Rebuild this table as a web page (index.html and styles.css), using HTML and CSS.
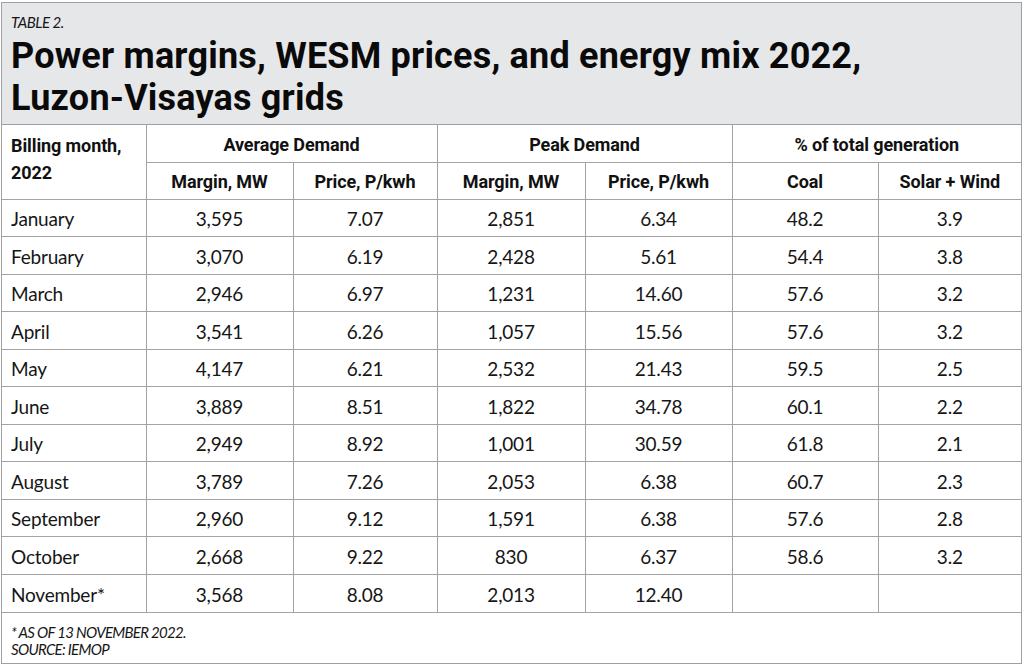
FILE: index.html
```html
<!DOCTYPE html>
<html>
<head>
<meta charset="utf-8">
<link rel="stylesheet" href="styles.css">
</head>
<body>
<div class="frame">
  <div class="head">
    <div class="kicker">TABLE 2.</div>
    <h1 class="title">Power margins, WESM prices, and energy mix 2022,<br>Luzon-Visayas grids</h1>
  </div>
  <table class="grid">
    <colgroup>
      <col class="c1"><col class="c2"><col class="c3"><col class="c4"><col class="c5"><col class="c6"><col class="c7">
    </colgroup>
    <thead>
      <tr class="hr">
        <th class="month-h" rowspan="2">Billing month,<br>2022</th>
        <th colspan="2">Average Demand</th>
        <th colspan="2">Peak Demand</th>
        <th colspan="2">% of total generation</th>
      </tr>
      <tr class="hr">
        <th>Margin, MW</th><th>Price, P/kwh</th><th>Margin, MW</th><th>Price, P/kwh</th><th>Coal</th><th>Solar + Wind</th>
      </tr>
    </thead>
    <tbody>
      <tr><td>January</td><td>3,595</td><td>7.07</td><td>2,851</td><td>6.34</td><td>48.2</td><td>3.9</td></tr>
      <tr><td>February</td><td>3,070</td><td>6.19</td><td>2,428</td><td>5.61</td><td>54.4</td><td>3.8</td></tr>
      <tr><td>March</td><td>2,946</td><td>6.97</td><td>1,231</td><td>14.60</td><td>57.6</td><td>3.2</td></tr>
      <tr><td>April</td><td>3,541</td><td>6.26</td><td>1,057</td><td>15.56</td><td>57.6</td><td>3.2</td></tr>
      <tr><td>May</td><td>4,147</td><td>6.21</td><td>2,532</td><td>21.43</td><td>59.5</td><td>2.5</td></tr>
      <tr><td>June</td><td>3,889</td><td>8.51</td><td>1,822</td><td>34.78</td><td>60.1</td><td>2.2</td></tr>
      <tr><td>July</td><td>2,949</td><td>8.92</td><td>1,001</td><td>30.59</td><td>61.8</td><td>2.1</td></tr>
      <tr><td>August</td><td>3,789</td><td>7.26</td><td>2,053</td><td>6.38</td><td>60.7</td><td>2.3</td></tr>
      <tr><td>September</td><td>2,960</td><td>9.12</td><td>1,591</td><td>6.38</td><td>57.6</td><td>2.8</td></tr>
      <tr><td>October</td><td>2,668</td><td>9.22</td><td>830</td><td>6.37</td><td>58.6</td><td>3.2</td></tr>
      <tr><td>November*</td><td>3,568</td><td>8.08</td><td>2,013</td><td>12.40</td><td></td><td></td></tr>
    </tbody>
  </table>
  <div class="foot">* AS OF 13 NOVEMBER 2022.<br>SOURCE: IEMOP</div>
</div>
</body>
</html>
```

FILE: styles.css
```css
html, body {
  margin: 0;
  padding: 0;
  background: #ffffff;
}
body {
  font-family: "Lato", "Open Sans", sans-serif;
  color: #161616;
}
.frame {
  box-sizing: border-box;
  width: 1021px;
  margin: 2px 0 0 1px;
  border: 1px solid #a0a0a0;
  background: #ffffff;
}
.head {
  box-sizing: border-box;
  height: 122px;
  background: #e6e7e9;
  border-bottom: 1px solid #a0a0a0;
  padding: 10px 0 0 9px;
}
.kicker {
  font-family: "Lato", sans-serif;
  font-style: italic;
  font-size: 15px;
  line-height: 18px;
  letter-spacing: -0.5px;
}
.title {
  margin: 4px 0 0 0;
  font-family: "Roboto", sans-serif;
  font-weight: 700;
  font-size: 36px;
  line-height: 42px;
  letter-spacing: 0.2px;
  color: #0a0a0a;
}
.grid {
  width: 1019px;
  table-layout: fixed;
  border-collapse: collapse;
  border-style: hidden;
}
.c1 { width: 144px; }
.c2 { width: 147px; }
.c3 { width: 144px; }
.c4 { width: 148px; }
.c5 { width: 147px; }
.c6 { width: 146px; }
.c7 { width: 143px; }
.grid th, .grid td {
  border: 1px solid #a3a3a3;
  padding: 0;
  text-align: center;
}
.grid th {
  height: 37px;
  font-family: "Roboto", sans-serif;
  font-weight: 700;
  font-size: 18px;
  letter-spacing: -0.1px;
  padding-top: 2px;
  box-sizing: border-box;
  color: #111111;
}
.grid th.month-h {
  text-align: left;
  vertical-align: top;
  padding: 7px 0 0 9px;
  line-height: 27px;
}
.grid td {
  height: 37.5px;
  font-size: 19px;
  font-weight: 400;
  padding-top: 2px;
  box-sizing: border-box;
  letter-spacing: -0.2px;
}
.grid td:first-child {
  text-align: left;
  padding-left: 9px;
}
.foot {
  box-sizing: border-box;
  height: 51px;
  border-top: 1px solid #a3a3a3;
  padding: 11px 0 0 9px;
  font-style: italic;
  font-size: 15px;
  line-height: 17px;
  letter-spacing: -0.7px;
}
```
